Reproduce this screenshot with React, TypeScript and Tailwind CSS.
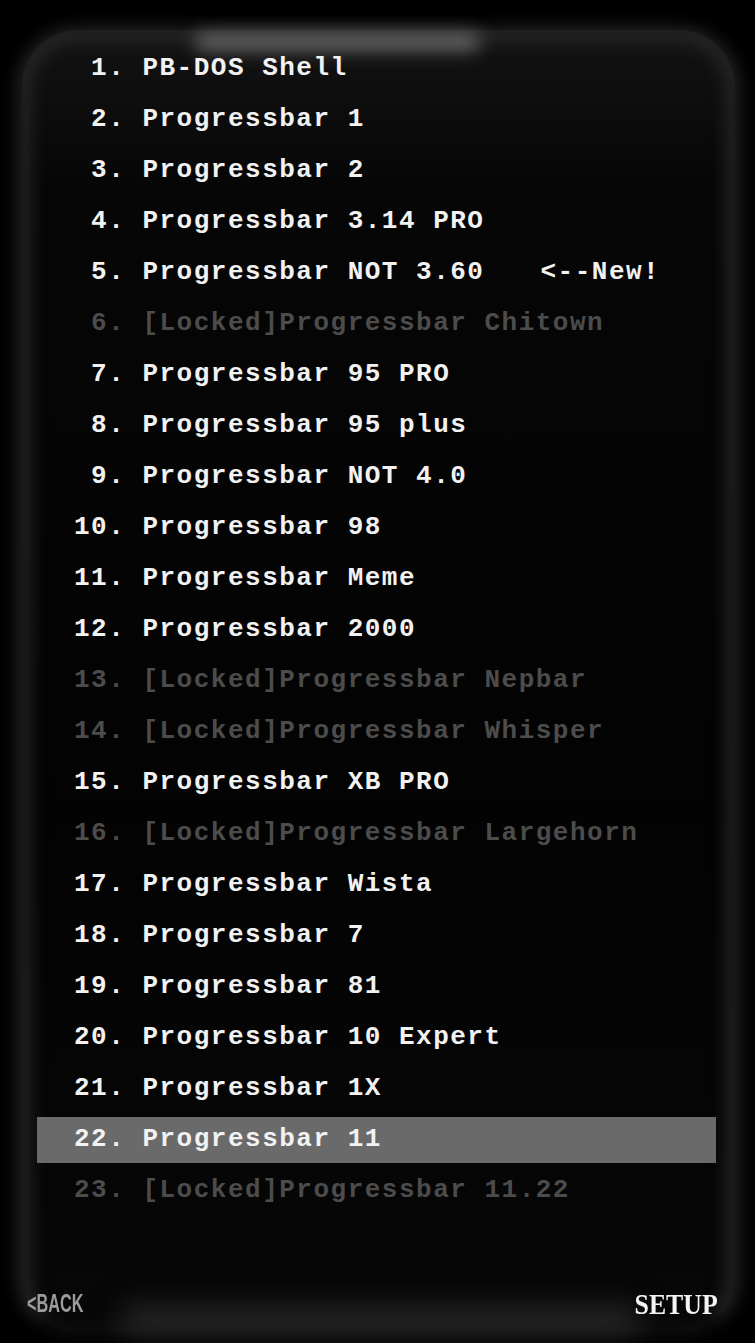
import React, { useState } from 'react';

type Entry = { label: string; locked?: boolean; note?: string };

const entries: Entry[] = [
  { label: 'PB-DOS Shell' },
  { label: 'Progressbar 1' },
  { label: 'Progressbar 2' },
  { label: 'Progressbar 3.14 PRO' },
  { label: 'Progressbar NOT 3.60', note: '<--New!' },
  { label: '[Locked]Progressbar Chitown', locked: true },
  { label: 'Progressbar 95 PRO' },
  { label: 'Progressbar 95 plus' },
  { label: 'Progressbar NOT 4.0' },
  { label: 'Progressbar 98' },
  { label: 'Progressbar Meme' },
  { label: 'Progressbar 2000' },
  { label: '[Locked]Progressbar Nepbar', locked: true },
  { label: '[Locked]Progressbar Whisper', locked: true },
  { label: 'Progressbar XB PRO' },
  { label: '[Locked]Progressbar Largehorn', locked: true },
  { label: 'Progressbar Wista' },
  { label: 'Progressbar 7' },
  { label: 'Progressbar 81' },
  { label: 'Progressbar 10 Expert' },
  { label: 'Progressbar 1X' },
  { label: 'Progressbar 11' },
  { label: '[Locked]Progressbar 11.22', locked: true },
];

export default function App() {
  const [selected, setSelected] = useState(21);

  return (
    <div className="relative h-[1343px] w-full overflow-hidden bg-black">
      {/* CRT glass + bezel glow */}
      <div className="pointer-events-none absolute left-[22px] right-[20px] top-[30px] bottom-[10px] rounded-[56px] bg-[linear-gradient(to_bottom,#141414_0%,#060606_12%,#030303_60%,#070707_100%)]"></div>
      <div className="pointer-events-none absolute left-[18px] right-[16px] top-[28px] bottom-[6px] rounded-[60px] border-[12px] border-[#2a2a2a] border-b-[#0e0e0e] blur-[8px]"></div>
      <div className="pointer-events-none absolute left-[195px] top-[34px] h-[16px] w-[285px] rounded-full bg-[#6e6e6e] blur-[9px]"></div>
      <div className="pointer-events-none absolute left-[120px] bottom-[10px] h-[26px] w-[520px] rounded-full bg-[#2a2a2a] blur-[14px]"></div>

      <div className="relative flex h-full flex-col">
        {/* menu list */}
        <ul className="flex flex-col pt-[43px] font-['Liberation_Mono','DejaVu_Sans_Mono',monospace] text-[26px] font-bold tracking-[1.5px]">
          {entries.map((e, i) => {
            const active = i === selected;
            return (
              <li key={i} className="flex h-[51px] items-center">
                <button
                  onClick={() => !e.locked && setSelected(i)}
                  className={`ml-[37px] flex h-[46px] w-[679px] items-center whitespace-pre pl-[37px] text-left ${
                    active ? 'bg-[#6a6a6a]' : ''
                  } ${e.locked ? 'text-[#4c4c4c]' : 'text-[#f2f2f2]'}`}
                >
                  {`${String(i + 1).padStart(2, ' ')}. ${e.label}`}
                  {e.note && <span className="ml-[56px]">{e.note}</span>}
                </button>
              </li>
            );
          })}
        </ul>

        {/* footer */}
        <div className="mt-auto flex items-center justify-between pb-[17px] pl-[27px] pr-[37px]">
          <span className="inline-block origin-left scale-x-[0.65] font-['Liberation_Sans',sans-serif] text-[25px] font-bold text-[#9c9c9c]">
            &lt;BACK
          </span>
          <span className="inline-block origin-right scale-x-[0.86] font-['Liberation_Serif',serif] text-[30px] font-bold text-[#f4f4f4]">
            SETUP
          </span>
        </div>
      </div>
    </div>
  );
}
